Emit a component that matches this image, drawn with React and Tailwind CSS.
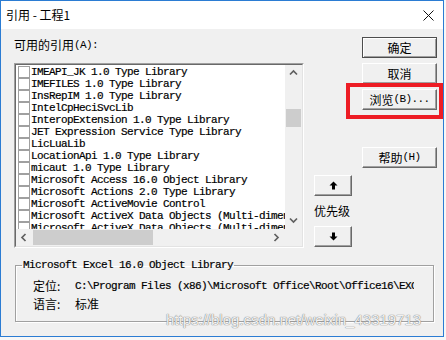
import React from "react";

const mono = "font-['Liberation_Mono',monospace] text-[11px] tracking-[-0.6px]";
const cjk = "font-['Noto_Sans_CJK_SC',sans-serif] text-[12px]";

const refs = [
  "IMEAPI_JK 1.0 Type Library",
  "IMEFILES 1.0 Type Library",
  "InsRepIM 1.0 Type Library",
  "IntelCpHeciSvcLib",
  "InteropExtension 1.0 Type Library",
  "JET Expression Service Type Library",
  "LicLuaLib",
  "LocationApi 1.0 Type Library",
  "micaut 1.0 Type Library",
  "Microsoft Access 16.0 Object Library",
  "Microsoft Actions 2.0 Type Library",
  "Microsoft ActiveMovie Control",
  "Microsoft ActiveX Data Objects (Multi-dimensional) 2.8 Library",
  "Microsoft ActiveX Data Objects (Multi-dimensional) 6.0 Library",
];

function Chevron({ dir }) {
  const d = {
    up: "M1 5.5 L4.5 2 L8 5.5",
    down: "M1 2.5 L4.5 6 L8 2.5",
    left: "M5.5 1 L2 4.5 L5.5 8",
    right: "M2.5 1 L6 4.5 L2.5 8",
  }[dir];
  return (
    <svg width="9" height="9" viewBox="0 0 9 9">
      <path d={d} stroke="#606060" strokeWidth="1.7" fill="none" />
    </svg>
  );
}

function Btn({ children, primary, className = "" }) {
  return (
    <div
      className={`h-[21px] flex items-center justify-center bg-[#f0f0f0] text-black ${
        primary
          ? "border border-[#4d4d4d] shadow-[inset_1px_1px_0_#ffffff,inset_-1px_-1px_0_#a0a0a0]"
          : "border border-t-white border-l-white border-r-[#696969] border-b-[#696969] shadow-[inset_-1px_-1px_0_#a0a0a0]"
      } ${className}`}
    >
      {children}
    </div>
  );
}

function ArrowIcon({ down }) {
  return (
    <svg width="9" height="9" viewBox="0 0 9 9" className={down ? "rotate-180" : ""}>
      <path d="M4.5 0.5 L8.5 4.5 L6 4.5 L6 8.5 L3 8.5 L3 4.5 L0.5 4.5 Z" fill="#000" />
    </svg>
  );
}

export default function App() {
  return (
    <div className="w-[446px] h-[340px] bg-[#f7f7f7] relative overflow-hidden">
      <div className="w-[444px] h-[337px] border border-[#2b7cd3] bg-[#f0f0f0] flex flex-col">
        {/* title bar */}
        <div className="h-[28px] bg-white flex items-center justify-between pl-[5px] pr-[9px]">
          <span className={`${cjk} text-black`}>引用 - 工程1</span>
          <svg width="11" height="11" viewBox="0 0 11 11">
            <path d="M0.5 0.5 L10.5 10.5 M10.5 0.5 L0.5 10.5" stroke="#111" strokeWidth="1" />
          </svg>
        </div>

        {/* body */}
        <div className="pt-[8px] pl-[13px]">
          <div className="flex">
            <div className="w-[290px]">
              <div className={`h-[16px] leading-[16px] flex items-center ${cjk}`}>
                可用的引用<span className={mono}>(A):</span>
              </div>
              <div className="mt-[10px] h-[185px] border border-t-[#a0a0a0] border-l-[#a0a0a0] border-r-white border-b-white">
                <div className="h-full border border-t-[#696969] border-l-[#696969] border-r-[#e3e3e3] border-b-[#e3e3e3] bg-white flex flex-col">
                  <div className="flex flex-1 min-h-0">
                    <div className="flex-1 overflow-hidden pt-[1px]">
                      {refs.map((r) => (
                        <div key={r} className="h-[12px] flex items-start">
                          <div className="ml-[2px] w-[12px] h-[12px] border border-[#a0a0a0] bg-white shrink-0" />
                          <span className={`ml-[1px] whitespace-nowrap leading-[12px] text-black [-webkit-text-stroke:0.2px_#000] ${mono}`}>{r}</span>
                        </div>
                      ))}
                    </div>
                    <div className="w-[17px] bg-[#f0f0f0] flex flex-col">
                      <div className="h-[17px] flex items-center justify-center">
                        <Chevron dir="up" />
                      </div>
                      <div className="flex-1 pt-[27px]">
                        <div className="mx-[1px] h-[18px] bg-[#cdcdcd]" />
                      </div>
                      <div className="h-[17px] flex items-center justify-center">
                        <Chevron dir="down" />
                      </div>
                    </div>
                  </div>
                  <div className="h-[17px] flex bg-[#f0f0f0]">
                    <div className="w-[17px] flex items-center justify-center">
                      <Chevron dir="left" />
                    </div>
                    <div className="flex-1 py-[1px]">
                      <div className="w-[120px] h-full bg-[#cdcdcd]" />
                    </div>
                    <div className="w-[17px] flex items-center justify-center">
                      <Chevron dir="right" />
                    </div>
                    <div className="w-[17px]" />
                  </div>
                </div>
              </div>
            </div>

            <div className="ml-[10px] w-[38px] flex flex-col justify-end pb-[1px]">
              <Btn>
                <ArrowIcon />
              </Btn>
              <div className={`h-[30px] flex items-center ${cjk}`}>优先级</div>
              <Btn>
                <ArrowIcon down />
              </Btn>
            </div>

            <div className={`ml-[10px] w-[75px] flex flex-col ${cjk}`}>
              <Btn primary>确定</Btn>
              <Btn className="mt-[5px]">取消</Btn>
              <Btn className="mt-[5px]">
                浏览<span className={mono}>(B)...</span>
              </Btn>
              <Btn className="mt-[37px]">
                帮助<span className={mono}>(H)</span>
              </Btn>
            </div>
          </div>

          <fieldset className="mt-[11px] ml-[1px] w-[419px] h-[63px] border border-[#a0a0a0] shadow-[1px_1px_0_#ffffff,inset_1px_1px_0_#ffffff] p-0">
            <legend className={`ml-[6px] px-[1px] leading-[12px] text-black [-webkit-text-stroke:0.2px_#000] ${mono}`}>
              Microsoft Excel 16.0 Object Library
            </legend>
            <div className={`mt-[6px] pl-[17px] h-[18px] flex items-center ${cjk}`}>
              <span className="w-[42px]">定位:</span>
              <span className={`w-[339px] overflow-hidden whitespace-nowrap [-webkit-text-stroke:0.2px_#000] ${mono}`}>
                C:\Program Files (x86)\Microsoft Office\Root\Office16\EXCEL.EXE
              </span>
            </div>
            <div className={`pl-[17px] h-[18px] flex items-center ${cjk}`}>
              <span className="w-[42px]">语言:</span>
              <span>标准</span>
            </div>
          </fieldset>
        </div>
      </div>

      {/* annotation + watermark */}
      <div className="absolute left-[346px] top-[83px] w-[97px] h-[36px] border-4 border-[#ed1c24]" />
      <div className="absolute left-[166px] top-[309px] font-['Liberation_Sans',sans-serif] text-[15px] text-white/90 [text-shadow:0_0_1px_#6f6f6f,0_0_1px_#8a8a8a] whitespace-nowrap">
        https://blog.csdn.net/weixin_43319713
      </div>
    </div>
  );
}
